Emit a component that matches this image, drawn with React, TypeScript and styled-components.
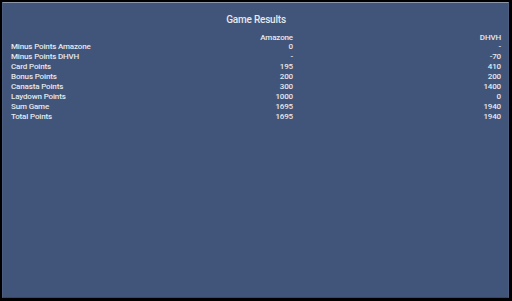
import { Fragment } from "react";
import styled, { createGlobalStyle } from "styled-components";

const GlobalStyle = createGlobalStyle`
	html, body {
		margin: 0;
		padding: 0;
		background: #000;
		width: 512px;
		height: 301px;
		overflow: hidden;
	}
`;

const Screen = styled.div`
	width: 512px;
	height: 301px;
	padding: 2px 3px 3px 2px;
	box-sizing: border-box;
	background: #000;
`;

const Panel = styled.div`
	height: 100%;
	box-sizing: border-box;
	background: #41557a;
	border-top: 1px solid #8d97a8;
	border-left: 1px solid #4d5f80;
	border-right: 1px solid #4d5f80;
	border-bottom: 1px solid #34466a;
	padding: 11px 7px 0 8px;
	font-family: Roboto, "Liberation Sans", sans-serif;
	color: #e6e8ec;
`;

const Title = styled.div`
	text-align: center;
	font-size: 10px;
	font-weight: 500;
	line-height: 12px;
	height: 19px;
	letter-spacing: -0.2px;
`;

const Table = styled.div`
	display: grid;
	grid-template-columns: 1fr 100px 208px;
	font-size: 8px;
	line-height: 10px;
	font-weight: 500;
	letter-spacing: -0.15px;
`;

const Cell = styled.div<{ $align?: "left" | "right" }>`
	text-align: ${(p) => p.$align ?? "right"};
	white-space: nowrap;
`;

const HeadCell = styled(Cell)`
	line-height: 8px;
	padding-top: 1px;
`;

const rows: [string, string, string][] = [
	["Minus Points Amazone", "0", "-"],
	["Minus Points DHVH", "-", "-70"],
	["Card Points", "195", "410"],
	["Bonus Points", "200", "200"],
	["Canasta Points", "300", "1400"],
	["Laydown Points", "1000", "0"],
	["Sum Game", "1695", "1940"],
	["Total Points", "1695", "1940"],
];

export default function App() {
	return (
		<Screen>
			<GlobalStyle />
			<Panel>
				<Title>Game Results</Title>
				<Table>
					<HeadCell $align="left" />
					<HeadCell>Amazone</HeadCell>
					<HeadCell>DHVH</HeadCell>
					{rows.map(([label, a, b]) => (
						<Fragment key={label}>
							<Cell $align="left">{label}</Cell>
							<Cell>{a}</Cell>
							<Cell>{b}</Cell>
						</Fragment>
					))}
				</Table>
			</Panel>
		</Screen>
	);
}
